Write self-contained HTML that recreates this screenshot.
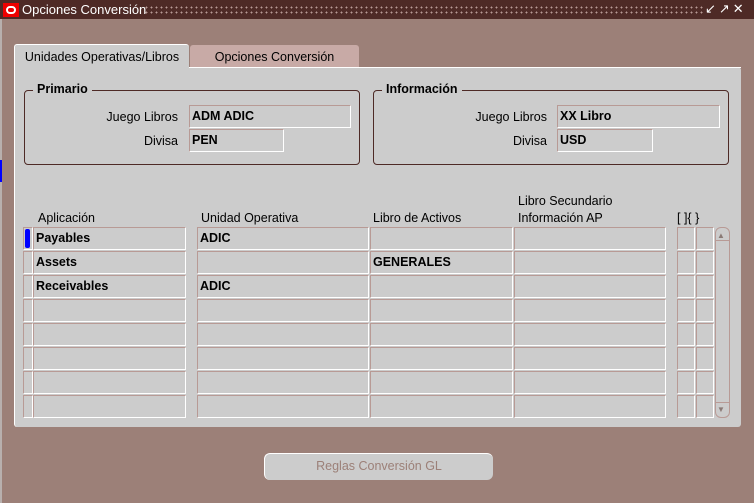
<!DOCTYPE html>
<html><head><meta charset="utf-8"><style>
*{margin:0;padding:0;box-sizing:border-box}
body{width:754px;height:503px;background:#9c8078;position:relative;overflow:hidden;font-family:"Liberation Sans",sans-serif;font-size:12px;color:#000}
.a{position:absolute}
.title{left:0;top:0;width:754px;height:19px;background:#4e2a26;color:#fff;font-size:12.5px}
.dots{left:144px;top:5px;width:560px;height:10px;background-image:radial-gradient(circle,#b89a95 0.8px,transparent 1px);background-size:5px 5px}
.panel{left:14px;top:67px;width:727px;height:360px;background:#cccccc;border-left:1px solid #fff;border-radius:0 3px 3px 3px}
.tab{height:24px;top:44px;text-align:center;line-height:25px;font-size:12.5px;border-radius:3px 3px 0 0}
.grp{border:1px solid #4e2a26;border-radius:4px}
.gl{background:#ccc;font-weight:bold;padding:0 4px;font-size:12.5px}
.f{background:#ccc;border-top:1px solid #b89a95;border-left:1px solid #b89a95;border-bottom:1px solid #fff;border-right:1px solid #fff;font-weight:bold;padding-left:2px;line-height:20px;font-size:12.5px;height:23px}
.lbl{text-align:right;font-size:12.5px}
.h{font-size:12.5px}
</style></head><body>
<div class="a" style="left:0;top:19px;width:2px;height:484px;background:#b8b0ae"></div>
<div class="a" style="left:0;top:160px;width:2px;height:22px;background:#00f"></div>
<div class="a title"></div>
<div class="a" style="left:3px;top:3px;width:16px;height:14px;background:#e00"><div class="a" style="left:3px;top:3px;width:10px;height:8px;border:2px solid #fff;border-radius:4px"></div></div>
<div class="a" style="left:22px;top:2px;color:#fff;font-size:13px">Opciones Conversión</div>
<div class="a dots"></div>
<div class="a" style="left:705px;top:1px;color:#fff;font-size:13px;letter-spacing:3px">↙↗✕</div>
<div class="a tab" style="left:14px;width:175px;background:#ccc;border-top:1px solid #fff;border-left:1px solid #fff">Unidades Operativas/Libros</div>
<div class="a tab" style="left:190px;width:169px;background:#c8aaa6;top:45px;height:22px">Opciones Conversión</div>
<div class="a panel"></div>
<div class="a" style="left:189px;top:67px;width:552px;height:1px;background:#fff"></div>
<div class="a grp" style="left:24px;top:90px;width:336px;height:75px"></div>
<div class="a gl" style="left:33px;top:82px">Primario</div>
<div class="a lbl" style="left:60px;top:110px;width:118px">Juego Libros</div>
<div class="a f" style="left:189px;top:105px;width:162px">ADM ADIC</div>
<div class="a lbl" style="left:60px;top:134px;width:118px">Divisa</div>
<div class="a f" style="left:189px;top:129px;width:95px">PEN</div>
<div class="a grp" style="left:373px;top:90px;width:356px;height:75px"></div>
<div class="a gl" style="left:382px;top:82px">Información</div>
<div class="a lbl" style="left:420px;top:110px;width:127px">Juego Libros</div>
<div class="a f" style="left:557px;top:105px;width:163px">XX Libro</div>
<div class="a lbl" style="left:420px;top:134px;width:127px">Divisa</div>
<div class="a f" style="left:557px;top:129px;width:96px">USD</div>
<div class="a h" style="left:38px;top:211px">Aplicación</div>
<div class="a h" style="left:201px;top:211px">Unidad Operativa</div>
<div class="a h" style="left:373px;top:211px">Libro de Activos</div>
<div class="a h" style="left:518px;top:194px">Libro Secundario</div>
<div class="a h" style="left:518px;top:211px">Información AP</div>
<div class="a h" style="left:677px;top:211px">[ ]{ }</div>
<div id="rows"></div>
<div class="a" style="left:25px;top:229px;width:5px;height:19px;background:#00f;border-radius:2px"></div>
<div class="a" style="left:715px;top:227px;width:15px;height:191px;border:1px solid #b89a95;border-radius:6px;background:#ccc"></div>
<div class="a" style="left:717px;top:231px;font-size:8px;color:#8a7a76">▲</div>
<div class="a" style="left:717px;top:405px;font-size:8px;color:#8a7a76">▼</div>
<div class="a" style="left:715px;top:240px;width:15px;height:1px;background:#b89a95"></div>
<div class="a" style="left:715px;top:402px;width:15px;height:1px;background:#b89a95"></div>
<div class="a" style="left:264px;top:453px;width:229px;height:27px;background:#ccc;border-radius:6px;border-top:1px solid #fff;border-left:1px solid #fff;text-align:center;line-height:25px;color:#9c8078;font-size:12.5px">Reglas Conversión GL</div>
<script>
var c=[[23,10,''],[33,153,'b'],[197,172,'u'],[370,143,'l'],[514,152,''],[677,18,''],[696,18,'']];
var d=[['Payables','ADIC',''],['Assets','','GENERALES'],['Receivables','ADIC','']];
var h='';
for(var r=0;r<8;r++){var y=227+r*24;for(var i=0;i<c.length;i++){var t='';if(d[r]){if(c[i][2]=='b')t=d[r][0];if(c[i][2]=='u')t=d[r][1];if(c[i][2]=='l')t=d[r][2];}
h+='<div class="a f" style="left:'+c[i][0]+'px;top:'+y+'px;width:'+c[i][1]+'px;height:23px">'+t+'</div>';}}
document.getElementById('rows').innerHTML=h;
</script>
</body></html>
